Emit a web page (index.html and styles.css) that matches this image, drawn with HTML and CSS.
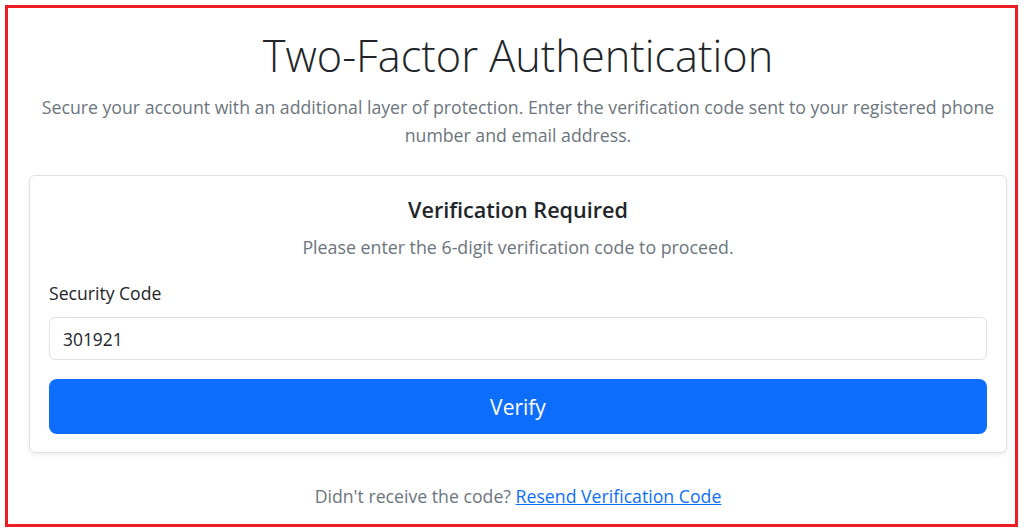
FILE: index.html
```html
<!DOCTYPE html>
<html lang="en">
<head>
<meta charset="utf-8">
<title>Two-Factor Authentication</title>
<link rel="stylesheet" href="styles.css">
</head>
<body>
<div class="frame">
  <main class="page">
    <h1 class="title">Two-Factor Authentication</h1>
    <p class="lead">Secure your account with an additional layer of protection. Enter the verification code sent to your registered phone number and email address.</p>
    <section class="card">
      <h2 class="card-title">Verification Required</h2>
      <p class="card-sub">Please enter the 6-digit verification code to proceed.</p>
      <label class="label" for="code">Security Code</label>
      <input class="input" id="code" type="text" value="301921">
      <button class="btn" type="button">Verify</button>
    </section>
    <p class="resend">Didn't receive the code? <a class="link" href="#">Resend Verification Code</a></p>
  </main>
</div>
</body>
</html>
```
FILE: styles.css
```css
* { box-sizing: border-box; }
html, body { margin: 0; padding: 0; background: #fff; }
body {
  font-family: "Open Sans", "Noto Sans", sans-serif;
  color: #212529;
}
.frame {
  margin: 5px 0 0 5px;
  width: 1013px;
  height: 522px;
  border: 3px solid #ee1c25;
  overflow: hidden;
}
.page {
  padding: 20px 8px 0 21px;
  display: flex;
  flex-direction: column;
  align-items: stretch;
  text-align: center;
}
.title {
  margin: 0;
  font-size: 43.3px;
  font-weight: 300;
  line-height: 56px;
  color: #212529;
}
.lead {
  margin: 9px 0 0;
  font-size: 17.7px;
  line-height: 28px;
  color: #6c757d;
}
.card {
  margin-top: 26px;
  border: 1px solid #dee2e6;
  border-radius: 6px;
  box-shadow: 0 2px 4px rgba(0,0,0,0.075);
  padding: 21px 19px 18px;
  display: flex;
  flex-direction: column;
  text-align: left;
}
.card-title {
  margin: 0;
  text-align: center;
  font-size: 21.6px;
  font-weight: 600;
  line-height: 26px;
  color: #212529;
}
.card-sub {
  margin: 11px 0 0;
  text-align: center;
  font-size: 17.8px;
  line-height: 27px;
  color: #6c757d;
}
.label {
  margin-top: 19px;
  font-size: 17.6px;
  line-height: 27px;
  color: #212529;
}
.input {
  margin-top: 10px;
  height: 43px;
  border: 1px solid #dee2e6;
  border-radius: 6px;
  padding: 0 13px;
  font-family: inherit;
  font-size: 17.4px;
  color: #212529;
  background: #fff;
  outline: none;
}
.btn {
  margin-top: 19px;
  height: 55px;
  border: 0;
  border-radius: 8px;
  background: #0d6efd;
  color: #fff;
  font-family: inherit;
  font-size: 21px;
  cursor: pointer;
}
.resend {
  margin: 30px 0 0;
  font-size: 17.7px;
  line-height: 27px;
  color: #6c757d;
}
.link {
  color: #0d6efd;
  text-decoration: underline;
}
```
